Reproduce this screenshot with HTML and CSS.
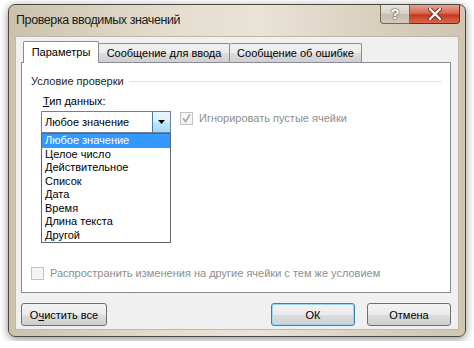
FILE: index.html
```html
<!DOCTYPE html>
<html lang="ru">
<head>
  <meta charset="UTF-8">
  <meta name="viewport" content="width=device-width, initial-scale=1">
  <title>Проверка вводимых значений</title>
  <link rel="stylesheet" href="styles.css">
</head>
<body>

<div class="window">
  <div class="titlebar">
    <div class="title">Проверка вводимых значений</div>
    <div class="caption">
      <div class="cap-help">?</div>
      <div class="cap-close">
        <svg width="14" height="12" viewBox="0 0 14 12">
          <path d="M2 1 L12 11 M12 1 L2 11" stroke="#6a2418" stroke-width="4" stroke-linecap="round"/>
          <path d="M2 1 L12 11 M12 1 L2 11" stroke="#fff" stroke-width="2.4" stroke-linecap="round"/>
        </svg>
      </div>
    </div>
  </div>

  <div class="client">
    <div class="tabs">
      <div class="tab active">Параметры</div>
      <div class="tab">Сообщение для ввода</div>
      <div class="tab">Сообщение об ошибке</div>
    </div>

    <div class="panel">
      <div class="group-title"><span>Условие проверки</span></div>

      <div class="type-row">
        <div class="type-col">
          <div class="label"><u>Т</u>ип данных:</div>
          <div class="combo">
            <div class="combo-value">Любое значение</div>
            <div class="combo-btn">
              <svg width="7" height="4" viewBox="0 0 7 4"><path d="M0 0 H7 L3.5 4 Z" fill="#000"/></svg>
            </div>
            <ul class="list">
              <li class="selected">Любое значение</li>
              <li>Целое число</li>
              <li>Действительное</li>
              <li>Список</li>
              <li>Дата</li>
              <li>Время</li>
              <li>Длина текста</li>
              <li>Другой</li>
            </ul>
          </div>
        </div>

        <div class="check disabled top-check">
          <span class="box">
            <svg width="11" height="11" viewBox="0 0 11 11"><path d="M2 5.5 L4.5 8.5 L9 1.5" fill="none" stroke="#a6a6a6" stroke-width="1.6"/></svg>
          </span>
          Игнорировать пустые ячейки
        </div>
      </div>

      <div class="check disabled bottom-check">
        <span class="box"></span>
        Распространить изменения на другие ячейки с тем же условием
      </div>
    </div>

    <div class="buttons">
      <button class="btn">О<u>ч</u>истить все</button>
      <div class="spacer"></div>
      <button class="btn default">ОК</button>
      <button class="btn">Отмена</button>
    </div>
  </div>
</div>

</body>
</html>
```

FILE: styles.css
```css
html, body {
  margin: 0;
  background: #fff;
}
body {
  padding: 4px 8px;
  font-family: "Liberation Sans", Arial, sans-serif;
  font-size: 11px;
  color: #000;
}
.window {
  width: 458px;
  height: 333px;
  box-sizing: border-box;
  border: 1px solid #4d4942;
  border-radius: 7px;
  background: linear-gradient(90deg, #cbc1ad, #e4ddcf 35%, #e9e3d8 55%, #d9cfbd 80%, #cfc5b1);
  box-shadow: 0 2px 8px rgba(0,0,0,0.45);
  display: flex;
  flex-direction: column;
}
.titlebar {
  height: 31px;
  display: flex;
  align-items: flex-start;
}
.title {
  font-size: 12.5px;
  letter-spacing: -0.4px;
  line-height: 31px;
  padding-left: 7px;
  flex: 1;
  color: #1a1a1a;
}
.caption {
  display: flex;
  margin-right: 5px;
}
.cap-help {
  width: 28px;
  height: 18px;
  border: 1px solid #6f685c;
  border-top: none;
  border-radius: 0 0 0 4px;
  background: linear-gradient(#e9e4da, #d8d1c3 50%, #c6bdad 51%, #d2cabb);
  color: #fff;
  font-size: 15px;
  font-weight: bold;
  line-height: 18px;
  text-align: center;
  text-shadow: 0 0 2px #555, 0 0 1px #333;
}
.cap-close {
  width: 49px;
  height: 18px;
  border: 1px solid #6b2a1f;
  border-left: none;
  border-top: none;
  border-radius: 0 0 4px 0;
  background: linear-gradient(#e8a190, #d66a52 45%, #c2391f 55%, #d8674c);
  display: flex;
  align-items: center;
  justify-content: center;
}
.client {
  flex: 1;
  margin: 0 6px 6px 6px;
  border: 1px solid #bfb7a8;
  background: #f0f0f0;
  padding: 4px 7px 0 5px;
  display: flex;
  flex-direction: column;
}
.tabs {
  display: flex;
  align-items: flex-end;
  height: 21px;
  padding-left: 2px;
  position: relative;
  z-index: 1;
}
.tab {
  height: 19px;
  box-sizing: border-box;
  border: 1px solid #898c95;
  border-bottom: none;
  border-left: none;
  background: linear-gradient(#f2f2f2, #ebebeb 50%, #dddddd 51%, #cfcfcf);
  line-height: 18px;
  border-radius: 2px 2px 0 0;
  text-align: center;
}
.tab.active {
  height: 22px;
  margin-bottom: -1px;
  background: #fff;
  border-left: 1px solid #898c95;
  line-height: 21px;
  width: 76px;
}
.tab:nth-child(2) {
  width: 131px;
}
.tab:nth-child(3) {
  width: 132px;
}
.panel {
  height: 231px;
  box-sizing: border-box;
  border: 1px solid #898c95;
  background: #fff;
  padding: 11px 8px 12px 9px;
  display: flex;
  flex-direction: column;
}
.group-title {
  display: flex;
  align-items: center;
  line-height: 14px;
  color: #1e1e1e;
}
.group-title::after {
  content: "";
  flex: 1;
  height: 1px;
  background: #dde3e8;
  margin-left: 5px;
}
.type-row {
  display: flex;
  padding-left: 10px;
  margin-top: 6px;
}
.label {
  line-height: 14px;
  padding-left: 2px;
  margin-bottom: 3px;
}
.combo {
  position: relative;
  width: 130px;
  height: 22px;
  box-sizing: border-box;
  border: 1px solid #6b8299;
  display: flex;
  background: #fff;
}
.combo-value {
  flex: 1;
  line-height: 20px;
  padding-left: 3px;
}
.combo-btn {
  width: 17px;
  border-left: 1px solid #3c7fb1;
  background: linear-gradient(#eaf6fd, #d9f0fc 50%, #bee6fd 51%, #a7d9f5);
  display: flex;
  align-items: center;
  justify-content: center;
}
.list {
  position: absolute;
  left: -1px;
  top: 21px;
  width: 130px;
  box-sizing: border-box;
  margin: 0;
  padding: 0;
  list-style: none;
  border: 1px solid #646464;
  background: #fff;
}
.list li {
  height: 13.5px;
  line-height: 13.5px;
  padding-left: 3px;
}
.list li.selected {
  background: #3399ff;
  color: #fff;
}
.check {
  display: flex;
  align-items: center;
  line-height: 14px;
}
.check.disabled {
  color: #8d8d8d;
}
.box {
  width: 11px;
  height: 11px;
  border: 1px solid #c2c2c2;
  background: #f4f4f4;
  margin-right: 6px;
  display: flex;
}
.top-check {
  align-self: flex-end;
  margin-left: 9px;
  margin-bottom: 8px;
}
.bottom-check {
  margin-top: auto;
}
.buttons {
  display: flex;
  margin-top: 10px;
  gap: 12px;
}
.spacer {
  flex: 1;
}
.btn {
  width: 86px;
  height: 23px;
  border: 1px solid #707070;
  border-radius: 3px;
  background: linear-gradient(#f2f2f2, #ebebeb 50%, #dddddd 51%, #cfcfcf);
  font-family: inherit;
  font-size: 11px;
  color: #000;
  padding: 0;
}
.btn.default {
  width: 84px;
  border-color: #3c7fb1;
  box-shadow: inset 0 0 0 1px #9fd4f5;
}
.btn:last-child {
  width: 84px;
}
```
